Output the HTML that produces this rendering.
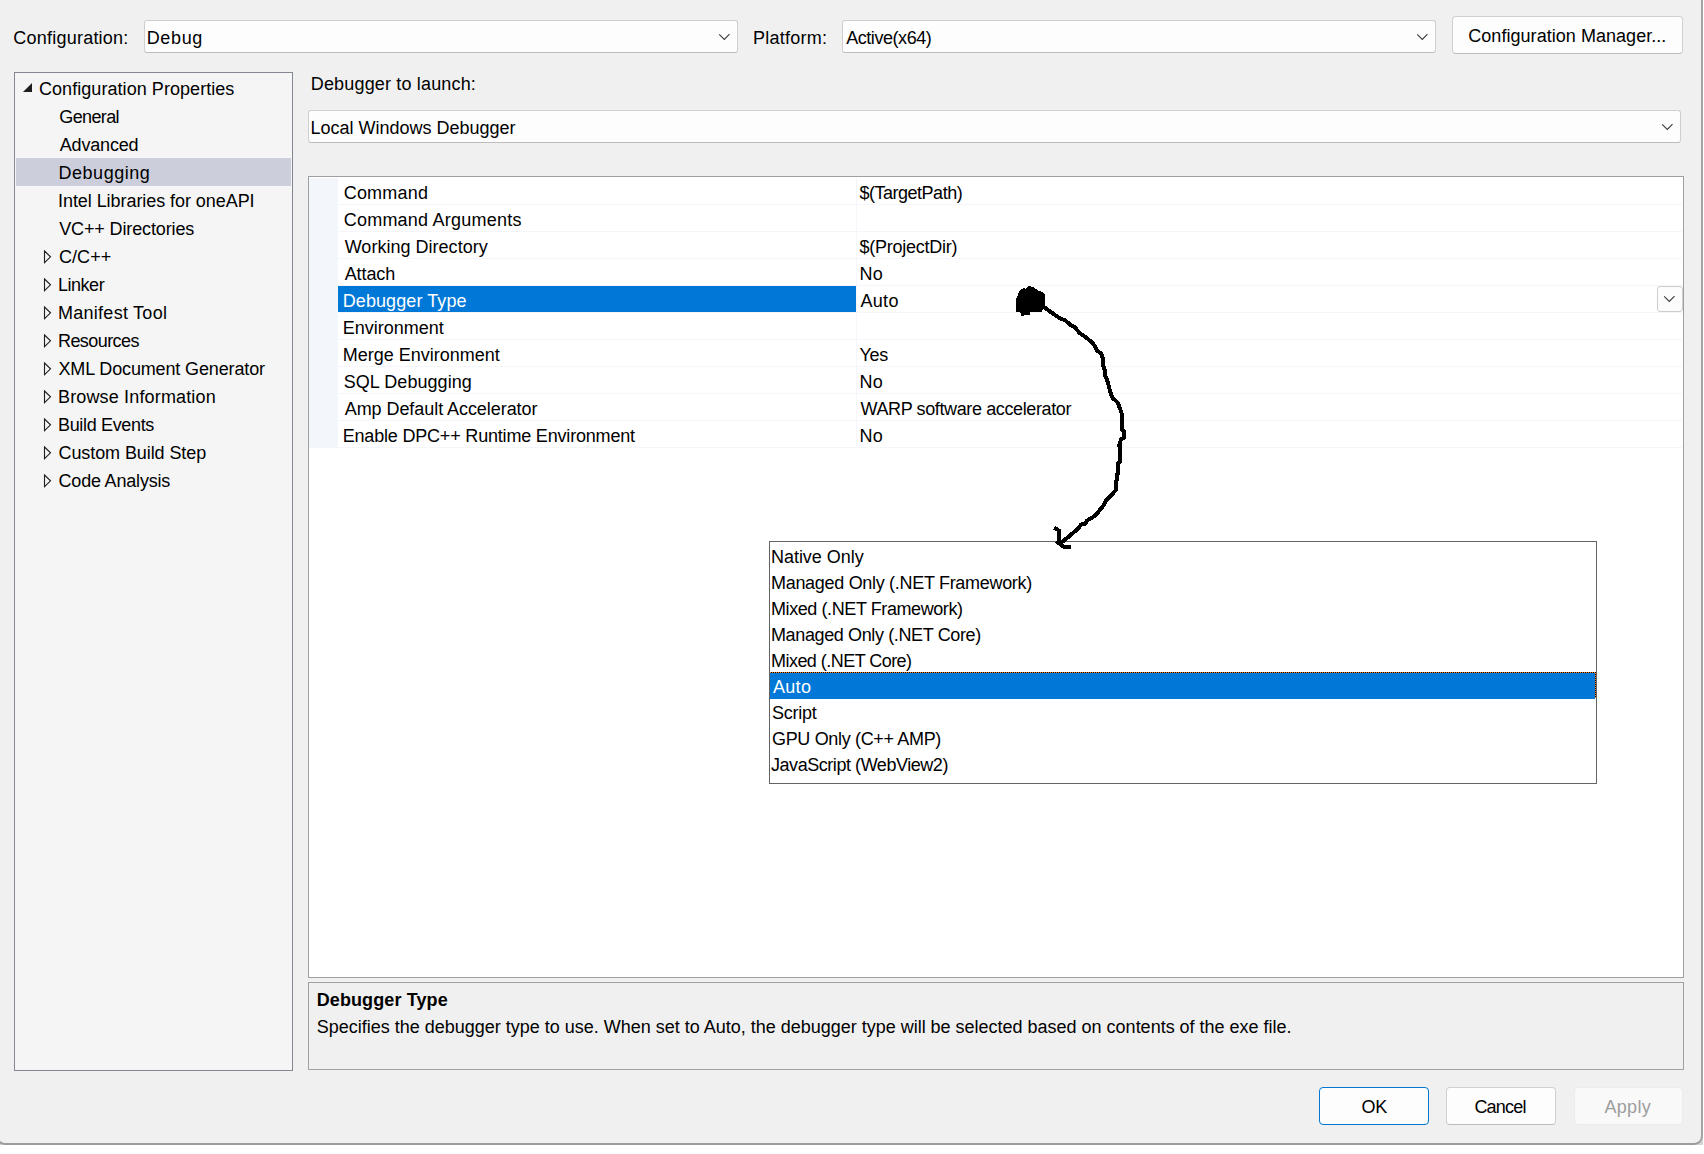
<!DOCTYPE html>
<html><head><meta charset="utf-8">
<style>
*{box-sizing:border-box;margin:0;padding:0}
html,body{width:1704px;height:1154px;overflow:hidden;background:#fff}
body{position:relative;font-family:"Liberation Sans",sans-serif;font-size:18px;color:#000}
.a{position:absolute}
.t{position:absolute;white-space:nowrap;line-height:28px;height:28px}
#win{position:absolute;left:-4px;top:-10px;width:1707px;height:1155px;background:#f0f0f0;border-left:2px solid #a0a0a0;border-right:2px solid #a3a3a3;border-bottom:2px solid #9c9c9c;border-radius:0 0 9px 9px}
.cb{position:absolute;background:#fdfdfd;border:1px solid #cfcfcf;border-bottom-color:#bdbdbd;border-radius:3px}
.chev{position:absolute;width:12px;height:8px}
.btn{position:absolute;background:#fdfdfd;border:1px solid #d0d0d0;border-bottom-color:#bcbcbc;border-radius:4px;text-align:center;line-height:38px}
#tree{position:absolute;left:14px;top:72px;width:279px;height:999px;background:#f5f5f5;border:1px solid #828790}
#grid{position:absolute;left:308px;top:176px;width:1376px;height:802px;background:#fff;border:1px solid #a0a0a0}
#desc{position:absolute;left:308px;top:982px;width:1376px;height:88px;background:#f0f0f0;border:1px solid #a0a0a0}

#list{position:absolute;left:769px;top:541px;width:828px;height:243px;background:#fff;border:1px solid #646464}
</style></head><body>
<div class="a" style="left:1693px;top:1135px;width:10px;height:10px;background:#d2d2d2"></div>
<div class="a" style="left:0px;top:1137px;width:5px;height:8px;background:#d2d2d2"></div>
<div id="win"></div>

<!-- top bar -->
<div class="cb" style="left:144px;top:20px;width:594px;height:33px"></div>
<svg class="chev" style="left:718px;top:33px" viewBox="0 0 12 8"><path d="M1.2 1.3 L6.3 6.5 L11.5 1.2" fill="none" stroke="#3a3a3a" stroke-width="1.1"/></svg>

<div class="cb" style="left:842px;top:20px;width:594px;height:33px"></div>
<svg class="chev" style="left:1416px;top:33px" viewBox="0 0 12 8"><path d="M1.2 1.3 L6.3 6.5 L11.5 1.2" fill="none" stroke="#3a3a3a" stroke-width="1.1"/></svg>

<div class="btn" style="left:1452px;top:16px;width:231px;height:38px"></div>

<!-- tree -->
<div id="tree"></div>
<div class="a" style="left:16px;top:158px;width:275px;height:28px;background:#cccedb"></div>
<svg class="a" style="left:22px;top:82px" width="12" height="12" viewBox="0 0 12 12"><path d="M1 10 L10 1 L10 10 Z" fill="#1e1e1e"/></svg>
<svg class="a" style="left:43px;top:250px" width="10" height="15" viewBox="0 0 10 15"><path d="M1.5 1 L7.5 6.8 L1.5 12.6 Z" fill="none" stroke="#1e1e1e" stroke-width="1.1"/></svg>
<svg class="a" style="left:43px;top:278px" width="10" height="15" viewBox="0 0 10 15"><path d="M1.5 1 L7.5 6.8 L1.5 12.6 Z" fill="none" stroke="#1e1e1e" stroke-width="1.1"/></svg>
<svg class="a" style="left:43px;top:306px" width="10" height="15" viewBox="0 0 10 15"><path d="M1.5 1 L7.5 6.8 L1.5 12.6 Z" fill="none" stroke="#1e1e1e" stroke-width="1.1"/></svg>
<svg class="a" style="left:43px;top:334px" width="10" height="15" viewBox="0 0 10 15"><path d="M1.5 1 L7.5 6.8 L1.5 12.6 Z" fill="none" stroke="#1e1e1e" stroke-width="1.1"/></svg>
<svg class="a" style="left:43px;top:362px" width="10" height="15" viewBox="0 0 10 15"><path d="M1.5 1 L7.5 6.8 L1.5 12.6 Z" fill="none" stroke="#1e1e1e" stroke-width="1.1"/></svg>
<svg class="a" style="left:43px;top:390px" width="10" height="15" viewBox="0 0 10 15"><path d="M1.5 1 L7.5 6.8 L1.5 12.6 Z" fill="none" stroke="#1e1e1e" stroke-width="1.1"/></svg>
<svg class="a" style="left:43px;top:418px" width="10" height="15" viewBox="0 0 10 15"><path d="M1.5 1 L7.5 6.8 L1.5 12.6 Z" fill="none" stroke="#1e1e1e" stroke-width="1.1"/></svg>
<svg class="a" style="left:43px;top:446px" width="10" height="15" viewBox="0 0 10 15"><path d="M1.5 1 L7.5 6.8 L1.5 12.6 Z" fill="none" stroke="#1e1e1e" stroke-width="1.1"/></svg>
<svg class="a" style="left:43px;top:474px" width="10" height="15" viewBox="0 0 10 15"><path d="M1.5 1 L7.5 6.8 L1.5 12.6 Z" fill="none" stroke="#1e1e1e" stroke-width="1.1"/></svg>

<!-- right -->
<div class="cb" style="left:308px;top:110px;width:1373px;height:33px"></div>
<svg class="chev" style="left:1661px;top:123px" viewBox="0 0 12 8"><path d="M1.2 1.3 L6.3 6.5 L11.5 1.2" fill="none" stroke="#3a3a3a" stroke-width="1.1"/></svg>

<div id="grid"></div>
<div class="a" style="left:309px;top:178px;width:29px;height:270px;background:#f3f6fb"></div>
<div class="a" style="left:338px;top:204px;width:1344px;height:1px;background:#f4f6fb"></div>
<div class="a" style="left:338px;top:231px;width:1344px;height:1px;background:#f4f6fb"></div>
<div class="a" style="left:338px;top:258px;width:1344px;height:1px;background:#f4f6fb"></div>
<div class="a" style="left:338px;top:285px;width:1344px;height:1px;background:#f4f6fb"></div>
<div class="a" style="left:338px;top:286px;width:518px;height:26px;background:#0078d7"></div>
<div class="a" style="left:338px;top:312px;width:1344px;height:1px;background:#f4f6fb"></div>
<div class="a" style="left:338px;top:339px;width:1344px;height:1px;background:#f4f6fb"></div>
<div class="a" style="left:338px;top:366px;width:1344px;height:1px;background:#f4f6fb"></div>
<div class="a" style="left:338px;top:393px;width:1344px;height:1px;background:#f4f6fb"></div>
<div class="a" style="left:338px;top:420px;width:1344px;height:1px;background:#f4f6fb"></div>
<div class="a" style="left:338px;top:447px;width:1344px;height:1px;background:#f4f6fb"></div>
<div class="a" style="left:856px;top:178px;width:1px;height:270px;background:#f4f6fb"></div>
<div class="a" style="left:1657px;top:286px;width:26px;height:26px;background:#fcfcfc;border:1px solid #cdcdcd;border-radius:3px"></div>
<svg class="chev" style="left:1663px;top:295px" viewBox="0 0 12 8"><path d="M1.2 1.3 L6.3 6.5 L11.5 1.2" fill="none" stroke="#3a3a3a" stroke-width="1.1"/></svg>

<div id="desc"></div>

<div class="btn" style="left:1319px;top:1087px;width:110px;height:38px;border:1px solid #0078d4"></div>
<div class="btn" style="left:1446px;top:1087px;width:110px;height:38px"></div>
<div class="btn" style="left:1574px;top:1087px;width:109px;height:38px;background:#f9f9f9;border-color:#ececec;color:#9d9d9d"></div>

<div id="list"></div>
<div class="a" style="left:770px;top:672px;width:825px;height:27px;background:#0078d7"></div>
<div class="a" style="left:770px;top:672px;width:826px;height:1px;background:repeating-linear-gradient(90deg,#ff8a1e 0 1px,#000 1px 2px)"></div>
<div class="a" style="left:1595px;top:672px;width:1px;height:26px;background:repeating-linear-gradient(180deg,#000 0 1px,#ff8a1e 1px 2px)"></div>
<div class="t" style="left:13.25px;top:24px;letter-spacing:0.231px;">Configuration:</div>
<div class="t" style="left:146.75px;top:24px;letter-spacing:0.625px;">Debug</div>
<div class="t" style="left:753.00px;top:24px;letter-spacing:0.250px;">Platform:</div>
<div class="t" style="left:846.20px;top:24px;letter-spacing:-0.440px;">Active(x64)</div>
<div class="t" style="left:1468.25px;top:22px;letter-spacing:0.043px;">Configuration Manager...</div>
<div class="t" style="left:310.75px;top:70px;letter-spacing:0.167px;">Debugger to launch:</div>
<div class="t" style="left:310.50px;top:114px;letter-spacing:0.000px;">Local Windows Debugger</div>
<div class="t" style="left:39.00px;top:75px;letter-spacing:0.054px;">Configuration Properties</div>
<div class="t" style="left:59.25px;top:103px;letter-spacing:-0.625px;">General</div>
<div class="t" style="left:59.75px;top:131px;letter-spacing:-0.179px;">Advanced</div>
<div class="t" style="left:58.50px;top:159px;letter-spacing:0.531px;">Debugging</div>
<div class="t" style="left:58.00px;top:187px;letter-spacing:-0.060px;">Intel Libraries for oneAPI</div>
<div class="t" style="left:59.25px;top:215px;letter-spacing:-0.133px;">VC++ Directories</div>
<div class="t" style="left:58.90px;top:243px;letter-spacing:0.100px;">C/C++</div>
<div class="t" style="left:58.00px;top:271px;letter-spacing:-0.480px;">Linker</div>
<div class="t" style="left:58.00px;top:299px;letter-spacing:0.267px;">Manifest Tool</div>
<div class="t" style="left:58.00px;top:327px;letter-spacing:-0.575px;">Resources</div>
<div class="t" style="left:58.50px;top:355px;letter-spacing:-0.138px;">XML Document Generator</div>
<div class="t" style="left:58.00px;top:383px;letter-spacing:0.153px;">Browse Information</div>
<div class="t" style="left:58.00px;top:411px;letter-spacing:-0.336px;">Build Events</div>
<div class="t" style="left:58.50px;top:439px;letter-spacing:-0.088px;">Custom Build Step</div>
<div class="t" style="left:58.50px;top:467px;letter-spacing:-0.183px;">Code Analysis</div>
<div class="t" style="left:343.70px;top:179px;letter-spacing:0.200px;">Command</div>
<div class="t" style="left:859.50px;top:179px;letter-spacing:-0.492px;">$(TargetPath)</div>
<div class="t" style="left:343.70px;top:206px;letter-spacing:0.231px;">Command Arguments</div>
<div class="t" style="left:344.70px;top:233px;letter-spacing:0.019px;">Working Directory</div>
<div class="t" style="left:859.50px;top:233px;letter-spacing:-0.250px;">$(ProjectDir)</div>
<div class="t" style="left:344.70px;top:260px;letter-spacing:-0.100px;">Attach</div>
<div class="t" style="left:859.50px;top:260px;letter-spacing:0.300px;">No</div>
<div class="t" style="left:342.70px;top:287px;letter-spacing:0.092px;color:#fff;">Debugger Type</div>
<div class="t" style="left:860.50px;top:287px;letter-spacing:0.300px;">Auto</div>
<div class="t" style="left:342.70px;top:314px;letter-spacing:0.000px;">Environment</div>
<div class="t" style="left:342.70px;top:341px;letter-spacing:0.000px;">Merge Environment</div>
<div class="t" style="left:859.50px;top:341px;letter-spacing:-0.300px;">Yes</div>
<div class="t" style="left:343.70px;top:368px;letter-spacing:0.058px;">SQL Debugging</div>
<div class="t" style="left:859.50px;top:368px;letter-spacing:0.300px;">No</div>
<div class="t" style="left:344.70px;top:395px;letter-spacing:-0.059px;">Amp Default Accelerator</div>
<div class="t" style="left:860.50px;top:395px;letter-spacing:-0.379px;">WARP software accelerator</div>
<div class="t" style="left:342.70px;top:422px;letter-spacing:-0.187px;">Enable DPC++ Runtime Environment</div>
<div class="t" style="left:859.50px;top:422px;letter-spacing:0.300px;">No</div>
<div class="t" style="left:771.00px;top:543px;letter-spacing:-0.040px;">Native Only</div>
<div class="t" style="left:771.00px;top:569px;letter-spacing:-0.304px;">Managed Only (.NET Framework)</div>
<div class="t" style="left:771.00px;top:595px;letter-spacing:-0.414px;">Mixed (.NET Framework)</div>
<div class="t" style="left:771.00px;top:621px;letter-spacing:-0.374px;">Managed Only (.NET Core)</div>
<div class="t" style="left:771.00px;top:647px;letter-spacing:-0.538px;">Mixed (.NET Core)</div>
<div class="t" style="left:773.00px;top:673px;letter-spacing:0.300px;color:#fff;">Auto</div>
<div class="t" style="left:772.00px;top:699px;letter-spacing:-0.240px;">Script</div>
<div class="t" style="left:772.00px;top:725px;letter-spacing:-0.335px;">GPU Only (C++ AMP)</div>
<div class="t" style="left:771.00px;top:751px;letter-spacing:-0.450px;">JavaScript (WebView2)</div>
<div class="t" style="left:316.70px;top:986px;letter-spacing:0.108px;;font-weight:bold">Debugger Type</div>
<div class="t" style="left:316.70px;top:1013px;letter-spacing:-0.006px;">Specifies the debugger type to use. When set to Auto, the debugger type will be selected based on contents of the exe file.</div>
<div class="t" style="left:1361.45px;top:1093px;letter-spacing:-0.300px;">OK</div>
<div class="t" style="left:1474.40px;top:1093px;letter-spacing:-0.800px;">Cancel</div>
<div class="t" style="left:1604.50px;top:1093px;letter-spacing:0.300px;color:#9d9d9d;">Apply</div>
<svg class="a" style="left:0;top:0" width="1704" height="1154" viewBox="0 0 1704 1154"><g shape-rendering="crispEdges"><path d="M1045.4 308.1 L1049.0 310.7 L1054.7 314.8 L1059.4 318.0 L1065.7 320.7 L1070.4 324.9 L1074.6 327.0 L1079.8 333.2 L1086.0 337.4 L1090.2 341.0 L1093.8 344.6 L1096.9 350.4 L1101.1 353.5 L1102.9 358.2 L1103.2 366.0 L1104.7 370.1 L1105.0 375.2 L1107.0 379.4 L1108.9 386.6 L1110.7 393.4 L1112.8 398.1 L1117.4 402.2 L1120.0 408.5 L1121.9 414.2 L1122.0 429.8 L1124.1 431.8 L1124.1 438.0 L1121.2 439.0 L1120.2 442.2 L1119.1 445.8 L1120.0 446.8 L1120.0 461.4 L1118.1 463.0 L1118.1 473.4 L1117.0 474.4 L1117.0 480.1 L1116.0 481.2 L1116.0 489.9 L1113.7 492.5 L1109.5 497.2 L1105.9 500.3 L1103.8 505.0 L1098.1 512.2 L1093.9 516.4 L1087.2 520.5 L1085.0 523.8 L1081.4 524.3 L1077.6 528.9 L1073.8 532.3 L1069.3 536.1 L1065.1 539.6 L1061.3 542.4" fill="none" stroke="#000" stroke-width="4" stroke-linejoin="round" stroke-linecap="square"/><path d="M1055.8 528.8 L1058.9 530.5 L1058.9 541.3 L1057.5 542.6 M1058.9 542.7 L1061.6 545.6 L1064.4 546.8 L1069.3 547.2" fill="none" stroke="#000" stroke-width="4" stroke-linejoin="round" stroke-linecap="square"/><path d="M1028.2 286.0 L1033.7 287.0 L1038.1 290.9 L1040.7 291.2 L1044.8 294.0 L1044.8 306.0 L1041.7 311.7 L1029.8 312.0 L1029.8 314.8 L1021.2 315.9 L1021.2 312.8 L1016.2 311.7 L1016.2 298.2 L1018.3 294.0 L1019.1 291.2 L1021.2 289.1 L1023.5 288.1 L1025.6 288.8 Z" fill="#000"/></g></svg>
</body></html>
